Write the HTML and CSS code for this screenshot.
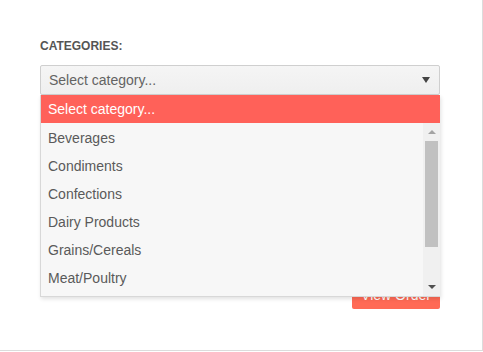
FILE: index.html
```html
<!DOCTYPE html>
<html>
<head>
<meta charset="utf-8">
<link rel="stylesheet" href="styles.css">
</head>
<body>
<div class="frame">
  <div class="form">
    <div class="label">CATEGORIES:</div>
    <div class="select-wrap">
      <div class="select">
        <span class="select-text">Select category...</span>
        <span class="caret"></span>
      </div>
      <div class="popup">
        <div class="opt selected">Select category...</div>
        <div class="list">
          <div class="items">
            <div class="opt">Beverages</div>
            <div class="opt">Condiments</div>
            <div class="opt">Confections</div>
            <div class="opt">Dairy Products</div>
            <div class="opt">Grains/Cereals</div>
            <div class="opt">Meat/Poultry</div>
          </div>
          <div class="scrollbar">
            <span class="sb-up"></span>
            <span class="sb-thumb"></span>
            <span class="sb-down"></span>
          </div>
        </div>
      </div>
    </div>
    <div class="actions">
      <button class="btn">View Order</button>
    </div>
  </div>
</div>
</body>
</html>
```

FILE: styles.css
```css
html, body {
  margin: 0;
  padding: 0;
  background: #fff;
}
body {
  font-family: "Liberation Sans", Arial, sans-serif;
}
.frame {
  width: 482px;
  height: 350px;
  border-right: 1px solid #dcdcdc;
  border-bottom: 1px solid #dcdcdc;
  box-sizing: content-box;
}
.form {
  padding: 39px 42px 0 40px;
}
.label {
  font-size: 12px;
  font-weight: bold;
  color: #555;
  line-height: 14px;
  height: 14px;
}
.select-wrap {
  position: relative;
  margin-top: 12px;
}
.select {
  height: 28px;
  border: 1px solid #cfcfcf;
  border-radius: 2px;
  background: linear-gradient(#f5f5f5, #efefef);
  display: flex;
  align-items: center;
  justify-content: space-between;
  padding: 0 9px 0 8px;
}
.select-text {
  font-size: 14px;
  color: #636363;
}
.caret {
  width: 0;
  height: 0;
  border-left: 4px solid transparent;
  border-right: 4px solid transparent;
  border-top: 6px solid #444;
}
.popup {
  position: absolute;
  top: 30px;
  left: 0;
  width: 399px;
  background: #f7f7f7;
  border-left: 1px solid #d8d8d8;
  border-bottom: 1px solid #d8d8d8;
  box-shadow: 1px 2px 4px rgba(0,0,0,0.12);
  z-index: 2;
}
.opt {
  height: 28px;
  line-height: 28px;
  padding-left: 7px;
  font-size: 14px;
  color: #5a5a5a;
}
.opt.selected {
  background: #ff6159;
  color: #fff;
}
.list {
  display: flex;
}
.items {
  flex: 1;
  padding-top: 1px;
  padding-bottom: 4px;
}
.scrollbar {
  width: 17px;
  background: #f0f0f0;
  display: flex;
  flex-direction: column;
  align-items: center;
}
.sb-up {
  width: 0;
  height: 0;
  margin-top: 7px;
  border-left: 4px solid transparent;
  border-right: 4px solid transparent;
  border-bottom: 4px solid #a3a3a3;
}
.sb-thumb {
  width: 13px;
  height: 106px;
  margin-top: 7px;
  background: #c1c1c1;
}
.sb-down {
  width: 0;
  height: 0;
  margin-top: auto;
  margin-bottom: 7px;
  border-left: 4px solid transparent;
  border-right: 4px solid transparent;
  border-top: 4px solid #505050;
}
.actions {
  display: flex;
  justify-content: flex-end;
  margin-top: 185px;
}
.btn {
  width: 88px;
  height: 29px;
  border: none;
  border-radius: 2px;
  background: #ff6a55;
  color: #fff;
  font-family: "Liberation Sans", Arial, sans-serif;
  font-size: 14px;
  padding: 0;
}
```
